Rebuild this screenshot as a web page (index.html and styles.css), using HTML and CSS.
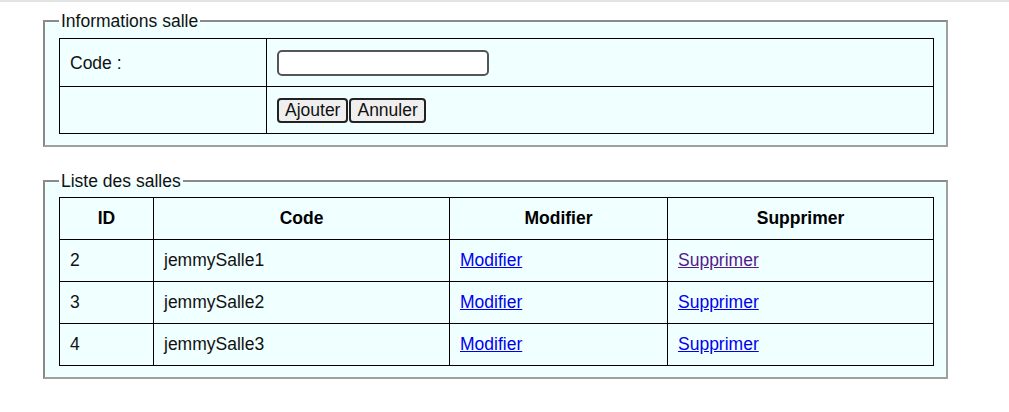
FILE: index.html
```html
<!DOCTYPE html>
<html lang="fr">
<head>
<meta charset="utf-8">
<title>Salles</title>
<link rel="stylesheet" href="styles.css">
</head>
<body>
<div class="topline"></div>
<div class="page">
  <fieldset class="box box-info">
    <legend>Informations salle</legend>
    <table class="grid form-grid">
      <colgroup><col class="c-label"><col></colgroup>
      <tr>
        <td>Code :</td>
        <td><input type="text" class="code-input"></td>
      </tr>
      <tr>
        <td></td>
        <td><div class="btns"><button class="btn">Ajouter</button><button class="btn">Annuler</button></div></td>
      </tr>
    </table>
  </fieldset>

  <fieldset class="box box-list">
    <legend>Liste des salles</legend>
    <table class="grid list-grid">
      <colgroup><col class="c-id"><col class="c-code"><col class="c-mod"><col></colgroup>
      <tr><th>ID</th><th>Code</th><th>Modifier</th><th>Supprimer</th></tr>
      <tr><td>2</td><td>jemmySalle1</td><td><a href="#m2">Modifier</a></td><td><a class="visited" href="#s2">Supprimer</a></td></tr>
      <tr><td>3</td><td>jemmySalle2</td><td><a href="#m3">Modifier</a></td><td><a href="#s3">Supprimer</a></td></tr>
      <tr><td>4</td><td>jemmySalle3</td><td><a href="#m4">Modifier</a></td><td><a href="#s4">Supprimer</a></td></tr>
    </table>
  </fieldset>
</div>
</body>
</html>
```

FILE: styles.css
```css
html, body {
  margin: 0;
  padding: 0;
  background: #ffffff;
}
body {
  font-family: "Liberation Sans", Arial, sans-serif;
  font-size: 17.5px;
  color: #111;
}
.topline {
  height: 2px;
  background: #e4e4e4;
}
.page {
  padding: 10px 0 0 43px;
}
.box {
  box-sizing: border-box;
  width: 905px;
  margin: 0;
  padding: 8px 12px 11px 14px;
  border: 2px solid #8a8a8a;
  border-color: #8a8a8a #a0a0a0 #a0a0a0 #8a8a8a;
  background: #f0ffff;
}
.box-list {
  margin-top: 25px;
  padding-top: 7px;
}
.box legend {
  padding: 0 2px;
  line-height: 18px;
  font-size: 17.5px;
  color: #111;
}
.grid {
  width: 875px;
  border-collapse: collapse;
  table-layout: fixed;
}
.grid td, .grid th {
  border: 1px solid #000;
  text-align: left;
}
.form-grid td {
  padding: 11px 10px 10px;
  vertical-align: middle;
  line-height: 18px;
}
.c-label { width: 207px; }
.code-input {
  display: block;
  box-sizing: border-box;
  width: 212px;
  height: 26px;
  margin: 0;
  border: 2px solid #555;
  border-radius: 5px;
  background: #fff;
  padding: 0 4px;
  font: 17.5px "Liberation Sans", Arial, sans-serif;
}
.btns {
  display: flex;
  gap: 1px;
}
.btn {
  box-sizing: border-box;
  height: 25px;
  margin: 0;
  padding: 0 6px;
  border: 2px solid #222;
  border-radius: 4px;
  background: #efefef;
  font: 17.5px "Liberation Sans", Arial, sans-serif;
  color: #111;
  line-height: 19px;
}
.list-grid th, .list-grid td {
  padding: 11px 10px 11px;
  line-height: 19px;
}
.list-grid th {
  text-align: center;
  font-weight: bold;
  color: #000;
}
.c-id { width: 94px; }
.c-code { width: 296px; }
.c-mod { width: 218px; }
.list-grid a {
  color: #0000ee;
  text-decoration: underline;
}
.list-grid a.visited {
  color: #551a8b;
}
```
